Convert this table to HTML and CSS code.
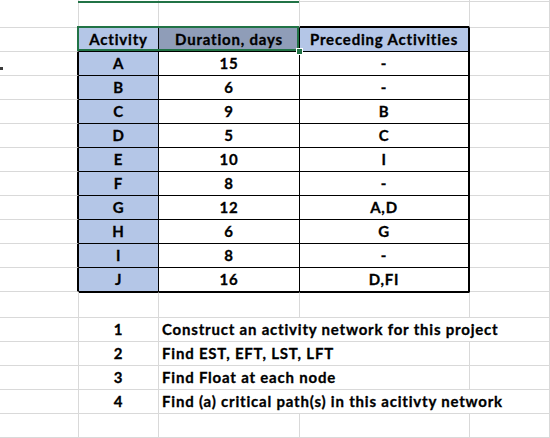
FILE: index.html
```html
<!DOCTYPE html>
<html>
<head>
<meta charset="utf-8">
<link rel="stylesheet" href="styles.css">
</head>
<body>
<div class="wrap">
  <div class="sheet">
    <!-- column header strip -->
    <div class="s"></div><div class="s"></div><div class="s"></div><div class="s sl"></div><div class="s sl"></div>
    <!-- row 1 -->
    <div class="c"></div><div class="c tt"></div><div class="c tt"></div><div class="c tt"></div><div class="c"></div>
    <!-- header -->
    <div class="c tl"></div><div class="c t blue">Activity</div><div class="c t sel">Duration, days</div><div class="c t tr blue">Preceding Activities</div><div class="c"></div>
    <!-- data -->
    <div class="c tl left"><span class="dot"></span></div><div class="c t blue">A</div><div class="c t">15</div><div class="c t tr">-</div><div class="c"></div>
    <div class="c tl"></div><div class="c t blue">B</div><div class="c t">6</div><div class="c t tr">-</div><div class="c"></div>
    <div class="c tl"></div><div class="c t blue">C</div><div class="c t">9</div><div class="c t tr">B</div><div class="c"></div>
    <div class="c tl"></div><div class="c t blue">D</div><div class="c t">5</div><div class="c t tr">C</div><div class="c"></div>
    <div class="c tl"></div><div class="c t blue">E</div><div class="c t">10</div><div class="c t tr">I</div><div class="c"></div>
    <div class="c tl"></div><div class="c t blue">F</div><div class="c t">8</div><div class="c t tr">-</div><div class="c"></div>
    <div class="c tl"></div><div class="c t blue">G</div><div class="c t">12</div><div class="c t tr">A,D</div><div class="c"></div>
    <div class="c tl"></div><div class="c t blue">H</div><div class="c t">6</div><div class="c t tr">G</div><div class="c"></div>
    <div class="c tl"></div><div class="c t blue">I</div><div class="c t">8</div><div class="c t tr">-</div><div class="c"></div>
    <div class="c tl"></div><div class="c t blue">J</div><div class="c t">16</div><div class="c t tr">D,FI</div><div class="c"></div>
    <!-- empty row under table -->
    <div class="c"></div><div class="c tb"></div><div class="c tb"></div><div class="c tb"></div><div class="c"></div>
    <!-- questions -->
    <div class="c"></div><div class="c">1</div><div class="c left span3">Construct an activity network for this project</div>
    <div class="c"></div><div class="c">2</div><div class="c left span2">Find EST, EFT, LST, LFT</div><div class="c"></div>
    <div class="c"></div><div class="c">3</div><div class="c left span2">Find Float at each node</div><div class="c"></div>
    <div class="c"></div><div class="c">4</div><div class="c left span3">Find (a) critical path(s) in this acitivty network</div>
    <div class="c"></div><div class="c"></div><div class="c"></div><div class="c"></div><div class="c"></div>
  </div>
  <div class="colhl"></div>
  <div class="selbox"></div>
  <div class="handle"></div>
</div>
</body>
</html>
```
FILE: styles.css
```css
* { box-sizing: border-box; }
html, body {
  margin: 0;
  padding: 0;
  background: #fff;
}
body {
  width: 550px;
  height: 438px;
  overflow: hidden;
  font-family: Lato, "Liberation Sans", sans-serif;
  font-weight: 700;
  font-size: 15px;
  letter-spacing: 0.8px;
  color: #000;
  -webkit-text-stroke: 0.3px #000;
}
.wrap {
  position: relative;
  width: 550px;
  height: 438px;
}
.sheet {
  display: grid;
  grid-template-columns: 79px 80px 141px 170px 80px;
  grid-template-rows: 4px repeat(12, 24px) 26px repeat(5, 24px);
}
.s {
  border-right: 1px solid #d9d9d9;
}
.sl {
  background: linear-gradient(to bottom, transparent 1px, #d9d9d9 1px, #d9d9d9 2px, transparent 2px);
}
.c {
  border-right: 1px solid #d9d9d9;
  border-bottom: 1px solid #d9d9d9;
  display: flex;
  align-items: flex-end;
  justify-content: center;
  padding-bottom: 3px;
  line-height: 17px;
  white-space: nowrap;
}
.t {
  border-right-color: #000;
  border-bottom-color: #000;
}
.tl {
  border-right: 2px solid #000;
}
.tr {
  border-right: 2px solid #000;
}
.tt {
  border-bottom: 2px solid #000;
}
.tb {
  border-top: 1px solid #000;
}
.blue {
  background: #b4c6e7;
}
.sel {
  background: #8f9db8;
  box-shadow: inset -1px -1px 0 #fff;
}
.left {
  justify-content: flex-start;
  padding-left: 3px;
}
.span2 { grid-column: span 2; }
.span3 { grid-column: span 3; }
.dot {
  display: block;
  width: 3px;
  height: 3px;
  margin-left: -3px;
  margin-bottom: 2px;
  background: #3a3a3a;
}
.colhl {
  position: absolute;
  left: 78px;
  top: 1px;
  width: 221px;
  height: 2px;
  background: #217346;
}
.selbox {
  position: absolute;
  left: 77px;
  top: 26px;
  width: 222px;
  height: 25px;
  border: 2px solid #217346;
}
.handle {
  position: absolute;
  left: 296px;
  top: 48px;
  width: 7px;
  height: 7px;
  background: #217346;
  border: 1px solid #fff;
}
```
